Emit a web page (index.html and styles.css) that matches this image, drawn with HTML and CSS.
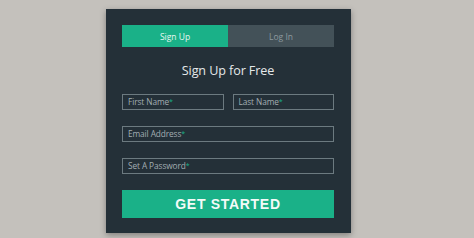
FILE: index.html
```html
<!DOCTYPE html>
<html lang="en">
<head>
    <meta charset="UTF-8">
    <meta name="viewport" content="width=device-width, initial-scale=1.0">
    <title>Sign Up</title>
    <link rel="stylesheet" href="styles.css">
</head>
<body>
    <div class="form">
        <div class="tabs">
            <div class="tab active">Sign Up</div>
            <div class="tab">Log In</div>
        </div>

        <h1>Sign Up for Free</h1>

        <div class="row">
            <div class="field">First Name<span class="req">*</span></div>
            <div class="field">Last Name<span class="req">*</span></div>
        </div>
        <div class="field">Email Address<span class="req">*</span></div>
        <div class="field">Set A Password<span class="req">*</span></div>

        <button class="submit">GET STARTED</button>
    </div>
</body>
</html>
```

FILE: styles.css
```css
html, body {
    margin: 0;
    height: 100%;
}

body {
    background: #c4c1bc;
    font-family: "Open Sans", "Noto Sans", sans-serif;
    padding-top: 9px;
    box-sizing: border-box;
}

.form {
    width: 245px;
    height: 224px;
    margin-left: 106px;
    box-sizing: border-box;
    padding: 16px 17px 0 16px;
    background: #243038;
    box-shadow: 0 2px 6px rgba(0, 0, 0, 0.35);
}

.tabs {
    display: flex;
    height: 22px;
}

.tab {
    flex: 1;
    display: flex;
    align-items: center;
    justify-content: center;
    font-size: 8.5px;
    background: #435158;
    color: #8d999f;
}

.tab.active {
    background: #1ab188;
    color: #e6f6f0;
}

h1 {
    margin: 0;
    height: 47px;
    line-height: 48px;
    text-align: center;
    font-weight: 400;
    font-size: 12.6px;
    letter-spacing: -0.1px;
    color: #e4e8ea;
}

.row {
    display: flex;
    gap: 9px;
}

.row .field {
    flex: 1;
}

.field {
    height: 16px;
    box-sizing: border-box;
    border: 1px solid #6c7a80;
    padding-left: 5px;
    font-size: 8.3px;
    line-height: 14px;
    letter-spacing: -0.1px;
    color: #a2adb2;
    margin-bottom: 16px;
}

.req {
    color: #1ab188;
    font-size: 7px;
    vertical-align: top;
}

.submit {
    display: block;
    width: 100%;
    height: 28px;
    border: none;
    background: #1ab188;
    color: #f4fbf8;
    font-family: "Liberation Sans", Arial, sans-serif;
    font-weight: bold;
    font-size: 14px;
    letter-spacing: 0.7px;
    padding: 0;
}
```
